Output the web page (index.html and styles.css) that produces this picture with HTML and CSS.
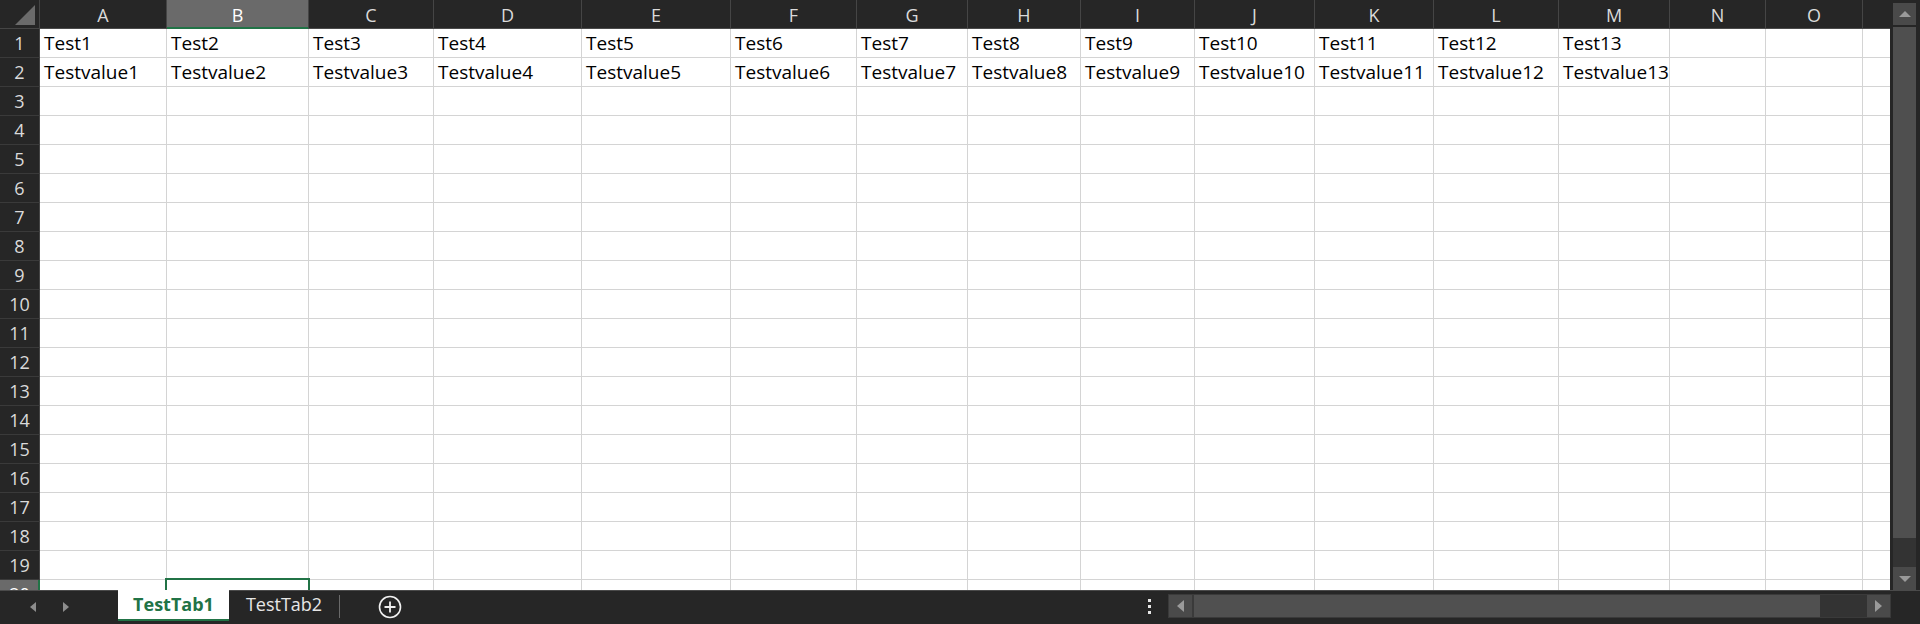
FILE: index.html
```html
<!DOCTYPE html>
<html>
<head>
<meta charset="utf-8">
<title>Sheet</title>
<link rel="stylesheet" href="styles.css">
</head>
<body>
<div class="app">
  <div class="main">
    <div class="sheet">
      <div class="grid">
        <div class="corner"><svg width="39" height="28" viewBox="0 0 39 28"><polygon points="15,25 35,25 35,5" fill="#6b6b6b"/></svg></div>
        <div class="ch">A</div><div class="ch sel">B</div><div class="ch">C</div><div class="ch">D</div><div class="ch">E</div><div class="ch">F</div><div class="ch">G</div><div class="ch">H</div><div class="ch">I</div><div class="ch">J</div><div class="ch">K</div><div class="ch">L</div><div class="ch">M</div><div class="ch">N</div><div class="ch">O</div><div class="ch p"></div>

        <div class="rh">1</div><div class="c">Test1</div><div class="c">Test2</div><div class="c">Test3</div><div class="c">Test4</div><div class="c">Test5</div><div class="c">Test6</div><div class="c">Test7</div><div class="c">Test8</div><div class="c">Test9</div><div class="c">Test10</div><div class="c">Test11</div><div class="c">Test12</div><div class="c">Test13</div><div class="c"></div><div class="c"></div><div class="c p"></div>
        <div class="rh">2</div><div class="c">Testvalue1</div><div class="c">Testvalue2</div><div class="c">Testvalue3</div><div class="c">Testvalue4</div><div class="c">Testvalue5</div><div class="c">Testvalue6</div><div class="c">Testvalue7</div><div class="c">Testvalue8</div><div class="c">Testvalue9</div><div class="c">Testvalue10</div><div class="c">Testvalue11</div><div class="c">Testvalue12</div><div class="c">Testvalue13</div><div class="c"></div><div class="c"></div><div class="c p"></div>
        <div class="rh">3</div><div class="c"></div><div class="c"></div><div class="c"></div><div class="c"></div><div class="c"></div><div class="c"></div><div class="c"></div><div class="c"></div><div class="c"></div><div class="c"></div><div class="c"></div><div class="c"></div><div class="c"></div><div class="c"></div><div class="c"></div><div class="c p"></div>
        <div class="rh">4</div><div class="c"></div><div class="c"></div><div class="c"></div><div class="c"></div><div class="c"></div><div class="c"></div><div class="c"></div><div class="c"></div><div class="c"></div><div class="c"></div><div class="c"></div><div class="c"></div><div class="c"></div><div class="c"></div><div class="c"></div><div class="c p"></div>
        <div class="rh">5</div><div class="c"></div><div class="c"></div><div class="c"></div><div class="c"></div><div class="c"></div><div class="c"></div><div class="c"></div><div class="c"></div><div class="c"></div><div class="c"></div><div class="c"></div><div class="c"></div><div class="c"></div><div class="c"></div><div class="c"></div><div class="c p"></div>
        <div class="rh">6</div><div class="c"></div><div class="c"></div><div class="c"></div><div class="c"></div><div class="c"></div><div class="c"></div><div class="c"></div><div class="c"></div><div class="c"></div><div class="c"></div><div class="c"></div><div class="c"></div><div class="c"></div><div class="c"></div><div class="c"></div><div class="c p"></div>
        <div class="rh">7</div><div class="c"></div><div class="c"></div><div class="c"></div><div class="c"></div><div class="c"></div><div class="c"></div><div class="c"></div><div class="c"></div><div class="c"></div><div class="c"></div><div class="c"></div><div class="c"></div><div class="c"></div><div class="c"></div><div class="c"></div><div class="c p"></div>
        <div class="rh">8</div><div class="c"></div><div class="c"></div><div class="c"></div><div class="c"></div><div class="c"></div><div class="c"></div><div class="c"></div><div class="c"></div><div class="c"></div><div class="c"></div><div class="c"></div><div class="c"></div><div class="c"></div><div class="c"></div><div class="c"></div><div class="c p"></div>
        <div class="rh">9</div><div class="c"></div><div class="c"></div><div class="c"></div><div class="c"></div><div class="c"></div><div class="c"></div><div class="c"></div><div class="c"></div><div class="c"></div><div class="c"></div><div class="c"></div><div class="c"></div><div class="c"></div><div class="c"></div><div class="c"></div><div class="c p"></div>
        <div class="rh">10</div><div class="c"></div><div class="c"></div><div class="c"></div><div class="c"></div><div class="c"></div><div class="c"></div><div class="c"></div><div class="c"></div><div class="c"></div><div class="c"></div><div class="c"></div><div class="c"></div><div class="c"></div><div class="c"></div><div class="c"></div><div class="c p"></div>
        <div class="rh">11</div><div class="c"></div><div class="c"></div><div class="c"></div><div class="c"></div><div class="c"></div><div class="c"></div><div class="c"></div><div class="c"></div><div class="c"></div><div class="c"></div><div class="c"></div><div class="c"></div><div class="c"></div><div class="c"></div><div class="c"></div><div class="c p"></div>
        <div class="rh">12</div><div class="c"></div><div class="c"></div><div class="c"></div><div class="c"></div><div class="c"></div><div class="c"></div><div class="c"></div><div class="c"></div><div class="c"></div><div class="c"></div><div class="c"></div><div class="c"></div><div class="c"></div><div class="c"></div><div class="c"></div><div class="c p"></div>
        <div class="rh">13</div><div class="c"></div><div class="c"></div><div class="c"></div><div class="c"></div><div class="c"></div><div class="c"></div><div class="c"></div><div class="c"></div><div class="c"></div><div class="c"></div><div class="c"></div><div class="c"></div><div class="c"></div><div class="c"></div><div class="c"></div><div class="c p"></div>
        <div class="rh">14</div><div class="c"></div><div class="c"></div><div class="c"></div><div class="c"></div><div class="c"></div><div class="c"></div><div class="c"></div><div class="c"></div><div class="c"></div><div class="c"></div><div class="c"></div><div class="c"></div><div class="c"></div><div class="c"></div><div class="c"></div><div class="c p"></div>
        <div class="rh">15</div><div class="c"></div><div class="c"></div><div class="c"></div><div class="c"></div><div class="c"></div><div class="c"></div><div class="c"></div><div class="c"></div><div class="c"></div><div class="c"></div><div class="c"></div><div class="c"></div><div class="c"></div><div class="c"></div><div class="c"></div><div class="c p"></div>
        <div class="rh">16</div><div class="c"></div><div class="c"></div><div class="c"></div><div class="c"></div><div class="c"></div><div class="c"></div><div class="c"></div><div class="c"></div><div class="c"></div><div class="c"></div><div class="c"></div><div class="c"></div><div class="c"></div><div class="c"></div><div class="c"></div><div class="c p"></div>
        <div class="rh">17</div><div class="c"></div><div class="c"></div><div class="c"></div><div class="c"></div><div class="c"></div><div class="c"></div><div class="c"></div><div class="c"></div><div class="c"></div><div class="c"></div><div class="c"></div><div class="c"></div><div class="c"></div><div class="c"></div><div class="c"></div><div class="c p"></div>
        <div class="rh">18</div><div class="c"></div><div class="c"></div><div class="c"></div><div class="c"></div><div class="c"></div><div class="c"></div><div class="c"></div><div class="c"></div><div class="c"></div><div class="c"></div><div class="c"></div><div class="c"></div><div class="c"></div><div class="c"></div><div class="c"></div><div class="c p"></div>
        <div class="rh">19</div><div class="c"></div><div class="c"></div><div class="c"></div><div class="c"></div><div class="c"></div><div class="c"></div><div class="c"></div><div class="c"></div><div class="c"></div><div class="c"></div><div class="c"></div><div class="c"></div><div class="c"></div><div class="c"></div><div class="c"></div><div class="c p"></div>
        <div class="rh rsel">20</div><div class="c"></div><div class="c act"></div><div class="c"></div><div class="c"></div><div class="c"></div><div class="c"></div><div class="c"></div><div class="c"></div><div class="c"></div><div class="c"></div><div class="c"></div><div class="c"></div><div class="c"></div><div class="c"></div><div class="c"></div><div class="c p"></div>
      </div>
    </div>
    <div class="vscroll">
      <div class="vbtn"><svg width="12" height="6" viewBox="0 0 12 6"><polygon points="0,6 12,6 6,0" fill="#9a9a9a"/></svg></div>
      <div class="vthumb"></div>
      <div class="vtrack"></div>
      <div class="vbtn vdown"><svg width="12" height="6" viewBox="0 0 12 6"><polygon points="0,0 12,0 6,6" fill="#9a9a9a"/></svg></div>
    </div>
  </div>
  <div class="bar">
    <div class="nav">
      <svg width="6" height="10" viewBox="0 0 6 10"><polygon points="6,0 6,10 0,5" fill="#8c8c8c"/></svg>
      <svg width="6" height="10" viewBox="0 0 6 10"><polygon points="0,0 0,10 6,5" fill="#8c8c8c"/></svg>
    </div>
    <div class="tab active">TestTab1</div>
    <div class="tab">TestTab2</div>
    <div class="sep"></div>
    <div class="add"><svg width="24" height="24" viewBox="0 0 24 24"><circle cx="12" cy="12" r="10.5" fill="none" stroke="#f0f0f0" stroke-width="1.6"/><path d="M12 6.5v11M6.5 12h11" stroke="#f0f0f0" stroke-width="1.8"/></svg></div>
    <div class="spacer"></div>
    <div class="dots"><svg width="3" height="15" viewBox="0 0 3 15"><rect x="0" y="0" width="3" height="3" fill="#e6e6e6"/><rect x="0" y="6" width="3" height="3" fill="#e6e6e6"/><rect x="0" y="12" width="3" height="3" fill="#e6e6e6"/></svg></div>
    <div class="hscroll">
      <div class="hbtn"><svg width="7" height="12" viewBox="0 0 7 12"><polygon points="7,0 7,12 0,6" fill="#9a9a9a"/></svg></div>
      <div class="hgap"></div>
      <div class="hthumb"></div>
      <div class="htrack"></div>
      <div class="hbtn"><svg width="7" height="12" viewBox="0 0 7 12"><polygon points="0,0 0,12 7,6" fill="#9a9a9a"/></svg></div>
    </div>
  </div>
</div>
</body>
</html>
```
FILE: styles.css
```css
* { box-sizing: border-box; margin: 0; padding: 0; }
html, body { width: 1920px; height: 624px; overflow: hidden; background: #262626; }
body { font-family: "Open Sans", "Noto Sans", sans-serif; }

.app { display: flex; flex-direction: column; height: 624px; }
.main { display: flex; height: 590px; }

.sheet { width: 1890px; height: 590px; overflow: hidden; background: #ffffff; }
.grid {
  display: grid;
  grid-template-columns: 40px 127px 142px 125px 148px 149px 126px 111px 113px 114px 120px 119px 125px 111px 96px 97px 27px;
  grid-auto-rows: 29px;
}

.corner { background: #262626; border-right: 1px solid #454545; border-bottom: 1px solid #454545; }
.corner svg { display: block; }

.ch {
  background: #262626;
  color: #dadada;
  font-size: 18px;
  line-height: 26px;
  padding-top: 2px;
  text-align: center;
  border-right: 1px solid #454545;
  border-bottom: 1px solid #4a4a4a;
}
.ch.sel { background: #6a6a6a; color: #ffffff; border-bottom-color: #217346; box-shadow: inset 0 -1px 0 #217346; }
.ch.p { border-right: none; }

.rh {
  background: #262626;
  color: #dadada;
  font-size: 18px;
  line-height: 27px;
  padding-top: 1px;
  text-align: center;
  border-right: 1px solid #454545;
  border-bottom: 1px solid #3a3a3a;
}
.rh.rsel { background: #6a6a6a; color: #ffffff; border-right-color: #217346; box-shadow: inset -1px 0 0 #217346; }

.c {
  color: #000000;
  font-size: 19px;
  line-height: 27px;
  padding: 1px 0 0 4px;
  white-space: nowrap;
  border-right: 1px solid #d4d4d4;
  border-bottom: 1px solid #d4d4d4;
}
.c.p { border-right: none; }
.c.act { position: relative; }
.c.act::after {
  content: "";
  position: absolute;
  top: -2px; left: -2px; right: -2px; bottom: -1px;
  border: 2px solid #217346;
}

.vscroll { width: 30px; height: 590px; padding: 3px 4px 0 3px; display: flex; flex-direction: column; }
.vbtn { height: 22px; background: #4a4a4a; display: flex; align-items: center; justify-content: center; }
.vbtn.vdown { height: 23px; }
.vthumb { height: 511px; margin-top: 2px; background: #4f4f4f; }
.vtrack { height: 29px; background: #333333; }

.bar { display: flex; align-items: flex-start; height: 34px; border-top: 1px solid #4a4a4a; background: #262626; }
.nav { width: 118px; display: flex; gap: 27px; padding: 11px 0 0 30px; }
.nav svg { display: block; }
.tab {
  width: 110px;
  height: 31px;
  margin-top: -1px;
  font-size: 18px;
  line-height: 28px;
  text-align: center;
  color: #e6e6e6;
  white-space: nowrap;
}
.tab.active {
  width: 111px;
  background: #ffffff;
  color: #217346;
  font-weight: 700;
  border-bottom: 2px solid #217346;
}
.sep { width: 1px; height: 23px; margin-top: 4px; background: #6a6a6a; }
.add { margin: 4px 0 0 38px; }
.add svg { display: block; }
.spacer { flex: 1; }
.dots { width: 3px; margin: 8px 17px 0 0; }
.dots svg { display: block; }
.hscroll {
  width: 723px;
  height: 24px;
  margin: 3px 29px 0 0;
  border: 1px solid #3a3a3a;
  background: #333333;
  display: flex;
}
.hbtn { width: 23px; background: #4a4a4a; display: flex; align-items: center; justify-content: center; }
.hgap { width: 2px; background: #3a3a3a; }
.hthumb { width: 626px; background: #505050; }
.htrack { flex: 1; }
```
